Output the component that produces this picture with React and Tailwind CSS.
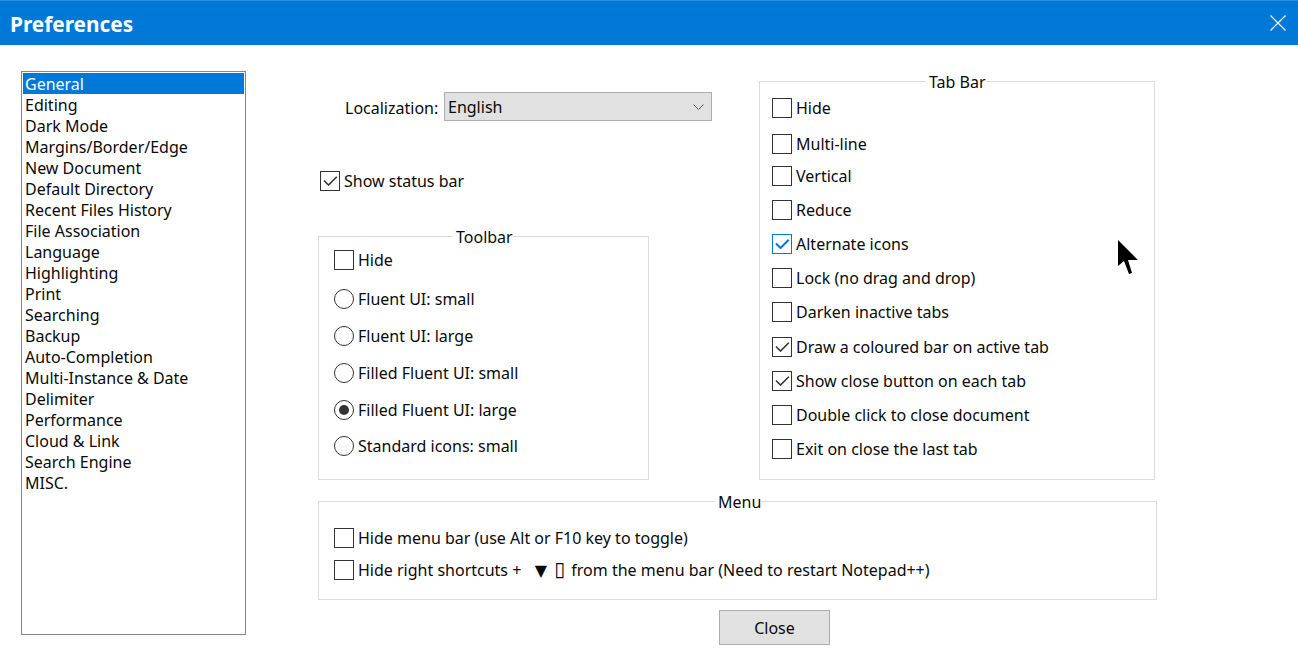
const F = "font-['Noto_Sans',sans-serif]";

function Check({ checked, blue }) {
  return (
    <span className={`w-5 h-5 shrink-0 border bg-white flex items-center justify-center ${blue ? "border-[#0078d7]" : "border-[#333333]"}`}>
      {checked && (
        <svg width="15" height="10" viewBox="0 0 15 10" fill="none" stroke={blue ? "#0078d7" : "#333333"} strokeWidth={blue ? 2 : 1.6}>
          <path d="M1 4.5 L5.5 9 L13.8 0.7" />
        </svg>
      )}
    </span>
  );
}

function Radio({ checked }) {
  return (
    <span className="w-5 h-5 shrink-0 rounded-full border border-[#333333] bg-white flex items-center justify-center">
      {checked && <span className="w-2.5 h-2.5 rounded-full bg-[#333333]" />}
    </span>
  );
}

function Row({ mt, radio, checked, blue, children }) {
  return (
    <div className={`flex items-center gap-1 h-5 whitespace-nowrap ${mt}`}>
      {radio ? <Radio checked={checked} /> : <Check checked={checked} blue={blue} />}
      <span className="leading-5">{children}</span>
    </div>
  );
}

function Group({ title, labelPos, className, children }) {
  return (
    <div className={`relative border border-[#dcdcdc] ${className}`}>
      <span className={`absolute -top-[10px] h-5 leading-5 bg-white pl-[3px] ${labelPos}`}>{title}</span>
      {children}
    </div>
  );
}

const sections = ["General","Editing","Dark Mode","Margins/Border/Edge","New Document","Default Directory","Recent Files History","File Association","Language","Highlighting","Print","Searching","Backup","Auto-Completion","Multi-Instance & Date","Delimiter","Performance","Cloud & Link","Search Engine","MISC."];

export default function App() {
  return (
    <div className={`relative w-[1298px] h-[661px] overflow-hidden bg-white text-[#0a0a0a] text-[16px] flex flex-col ${F}`}>
      <header className="h-[45px] shrink-0 bg-[#0078d7] border-t border-[#2b8fe0] flex items-center justify-between pl-[10px] pr-[12px] text-white">
        <h1 className="text-[20.8px] font-bold leading-none pt-[2px]">Preferences</h1>
        <svg width="16" height="16" viewBox="0 0 16 16" stroke="#ffffff" strokeWidth="1.1" fill="none">
          <path d="M0.5 0.5 L15.5 15.5 M15.5 0.5 L0.5 15.5" />
        </svg>
      </header>

      <main className="flex-1 flex pl-[21px] pt-[26px]">
        <ul className="w-[225px] h-[564px] shrink-0 border border-[#828790] p-[1px]">
          {sections.map((s, i) => (
            <li key={s} className={`h-[21px] leading-[23px] pl-[2px] whitespace-nowrap ${i === 0 ? "bg-[#0078d7] text-white" : ""}`}>{s}</li>
          ))}
        </ul>

        <div className="ml-[72px] w-[839px] flex flex-col">
          <div className="flex h-[409px]">
            <div className="w-[331px] shrink-0 flex flex-col">
              <div className="flex items-center mt-[21px] ml-[27px] h-[29px]">
                <span className="w-[99px] shrink-0 pt-[2px]">Localization:</span>
                <div className="w-[268px] shrink-0 h-[29px] bg-[#e1e1e1] border border-[#adadad] flex items-center justify-between pl-[3px] pr-[7px]">
                  <span>English</span>
                  <svg width="11" height="6" viewBox="0 0 11 6" fill="none" stroke="#555555" strokeWidth="1"><path d="M0.5 0.5 L5.5 5.5 L10.5 0.5" /></svg>
                </div>
              </div>
              <div className="ml-[2px]"><Row mt="mt-[50px]" checked>Show status bar</Row></div>
              <Group title="Toolbar" labelPos="left-[134px]" className="mt-[45px] h-[244px] pl-[15px] pt-[13px]">
                <Row>Hide</Row>
                <Row mt="mt-[19px]" radio>Fluent UI: small</Row>
                <Row mt="mt-[17px]" radio>Fluent UI: large</Row>
                <Row mt="mt-[17px]" radio>Filled Fluent UI: small</Row>
                <Row mt="mt-[17px]" radio checked>Filled Fluent UI: large</Row>
                <Row mt="mt-[16px]" radio>Standard icons: small</Row>
              </Group>
            </div>

            <Group title="Tab Bar" labelPos="left-[166px]" className="ml-[110px] mt-[10px] w-[396px] h-[399px] pl-[12px] pt-[16px]">
              <Row>Hide</Row>
              <Row mt="mt-[16px]">Multi-line</Row>
              <Row mt="mt-[12px]">Vertical</Row>
              <Row mt="mt-[14px]">Reduce</Row>
              <Row mt="mt-[14px]" checked blue>Alternate icons</Row>
              <Row mt="mt-[14px]">Lock (no drag and drop)</Row>
              <Row mt="mt-[14px]">Darken inactive tabs</Row>
              <Row mt="mt-[15px]" checked>Draw a coloured bar on active tab</Row>
              <Row mt="mt-[14px]" checked>Show close button on each tab</Row>
              <Row mt="mt-[14px]">Double click to close document</Row>
              <Row mt="mt-[14px]">Exit on close the last tab</Row>
            </Group>
          </div>

          <Group title="Menu" labelPos="left-[396px]" className="mt-[21px] w-[839px] h-[99px] pl-[15px] pt-[26px]">
            <Row>Hide menu bar (use Alt or F10 key to toggle)</Row>
            <Row mt="mt-[12px]">
              Hide right shortcuts +&nbsp; <span className="ml-[5px] font-['DejaVu_Sans',sans-serif] leading-[0]">▼</span> <span className="ml-[3px] mr-[2px] font-['DejaVu_Sans',sans-serif] text-[20px] leading-[0]">▯</span> from the menu bar (Need to restart Notepad++)
            </Row>
          </Group>

          <button className="mt-[10px] ml-[401px] w-[111px] h-[35px] bg-[#e1e1e1] border border-[#adadad]">Close</button>
        </div>
      </main>

      <svg className="absolute left-[1117px] top-[239px]" width="23" height="37" viewBox="0 0 23 37" fill="#000000">
        <path d="M1 1 L1 27 L7 22 L12 35 L15 34 L11 21 L21 21 Z" />
      </svg>
    </div>
  );
}
